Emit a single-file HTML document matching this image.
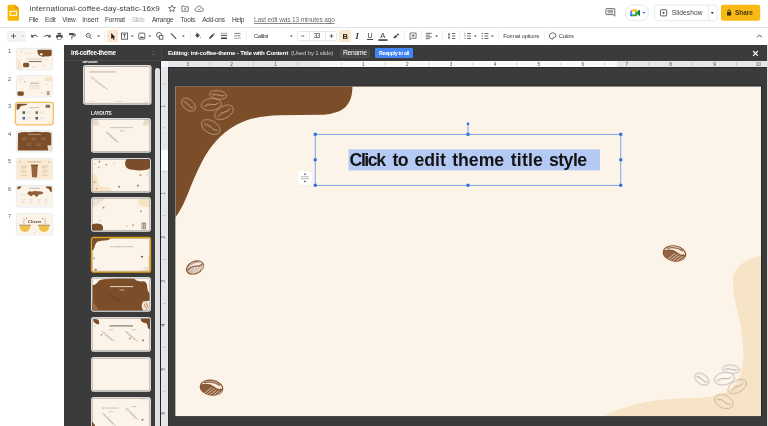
<!DOCTYPE html>
<html lang="en"><head><meta charset="utf-8"><title>international-coffee-day-static-16x9 - Google Slides</title>
<style>
html,body{margin:0;padding:0;}
body{width:768px;height:426px;overflow:hidden;background:#fff;position:relative;font-family:'Liberation Sans', sans-serif;}
.t{position:absolute;white-space:pre;line-height:1;font-family:'Liberation Sans', sans-serif;}
.a{position:absolute;}
svg{position:absolute;overflow:visible;}

.sep{position:absolute;top:31.3px;width:1px;height:9.6px;background:#eff0f2;}

</style></head><body>
<div id="app" style="position:absolute;left:0;top:0;width:768px;height:426px;overflow:hidden;will-change:transform">
<div class="a" id="header" style="left:0;top:0;width:768px;height:27px;background:#fff"></div>
<svg style="left:0;top:0" width="30" height="27" viewBox="0 0 30 27">
<path d="M9.1 4.8 H15.2 L19 8.6 V19.4 Q19 20.8 17.6 20.8 H9.1 Q7.6 20.8 7.6 19.4 V6.2 Q7.6 4.8 9.1 4.8 Z" fill="#f6b704"/>
<path d="M15.2 4.8 L19 8.6 H15.2 Z" fill="#e09a02"/>
<rect x="10.100" y="11.400" width="6.400" height="3.900" fill="none" stroke="#fff" stroke-width="1.050"/>
</svg>
<span class="t" style="left:29.60px;top:5px;font-size:8.1px;font-weight:400;color:#3a3a3a;letter-spacing:0.112px;">international-coffee-day-static-16x9</span>
<svg style="left:0;top:0" width="220" height="27" viewBox="0 0 220 27" fill="none" stroke="#555" stroke-width="0.75" stroke-linejoin="round">
<path d="M172 5.1 L173 7.4 L175.5 7.6 L173.6 9.2 L174.2 11.6 L172 10.3 L169.8 11.6 L170.4 9.2 L168.5 7.6 L171 7.4 Z"/>
<path d="M181.9 5.9 H184.2 L185 6.8 H188.3 V11.3 H181.9 Z"/>
<path d="M185.1 7.8 V10.2 M183.9 9 H186.3" stroke-width="0.6"/>
<path d="M196.5 11.3 Q194.9 11.2 194.9 9.7 Q195 8.3 196.5 8.2 Q197 6 199.2 6 Q201.2 6.1 201.7 8 Q203.5 8.2 203.5 9.7 Q203.4 11.2 201.9 11.3 Z"/>
<path d="M198 9 L199 10 L200.6 8.3" stroke-width="0.55"/>
</svg>
<span class="t" style="left:29.00px;top:17px;font-size:6.5px;font-weight:400;color:#3c3c3c;letter-spacing:-0.295px;">File</span>
<span class="t" style="left:45.10px;top:17px;font-size:6.5px;font-weight:400;color:#3c3c3c;letter-spacing:-0.168px;">Edit</span>
<span class="t" style="left:62.30px;top:17px;font-size:6.5px;font-weight:400;color:#3c3c3c;letter-spacing:-0.161px;">View</span>
<span class="t" style="left:82.30px;top:17px;font-size:6.5px;font-weight:400;color:#3c3c3c;letter-spacing:-0.013px;">Insert</span>
<span class="t" style="left:105.00px;top:17px;font-size:6.5px;font-weight:400;color:#3c3c3c;letter-spacing:-0.119px;">Format</span>
<span class="t" style="left:131.70px;top:17px;font-size:6.5px;font-weight:400;color:#b5b5b5;letter-spacing:-0.342px;">Slide</span>
<span class="t" style="left:152.00px;top:17px;font-size:6.5px;font-weight:400;color:#3c3c3c;letter-spacing:-0.271px;">Arrange</span>
<span class="t" style="left:180.50px;top:17px;font-size:6.5px;font-weight:400;color:#3c3c3c;letter-spacing:-0.097px;">Tools</span>
<span class="t" style="left:202.20px;top:17px;font-size:6.5px;font-weight:400;color:#3c3c3c;letter-spacing:-0.236px;">Add-ons</span>
<span class="t" style="left:232.00px;top:17px;font-size:6.5px;font-weight:400;color:#3c3c3c;letter-spacing:-0.325px;">Help</span>
<span class="t" style="left:254.10px;top:17px;font-size:6.5px;font-weight:400;color:#6a6a6a;letter-spacing:-0.130px;text-decoration:underline;text-decoration-thickness:0.5px;text-underline-offset:1px;text-decoration-color:#8a8a8a;">Last edit was 13 minutes ago</span>
<svg style="left:600px;top:0" width="168" height="27" viewBox="600 0 168 27">
<!-- comment icon -->
<path d="M606.3 8.6 H614.4 Q614.8 8.6 614.8 9 V16.2 L613 14.6 H606.3 Q605.9 14.6 605.9 14.2 V9 Q605.9 8.6 606.3 8.6 Z" fill="none" stroke="#5f6368" stroke-width="0.9"/>
<path d="M607.5 10.3 H613.2 M607.5 11.6 H613.2 M607.5 12.9 H613.2" stroke="#5f6368" stroke-width="0.7"/>
<!-- meet pill -->
<rect x="625.2" y="4.9" width="23.4" height="15.8" rx="7.9" fill="#fff" stroke="#dadce0" stroke-width="0.6"/>
<rect x="630.2" y="9.5" width="7" height="6.6" fill="#fff"/>
<path d="M630.2 11.4 L632.2 9.4 V11.4 Z" fill="#ea4335"/>
<path d="M632.2 9.4 H637.2 V11.4 H632.2 Z" fill="#fbbc04"/>
<path d="M630.2 11.4 H632.2 V14.2 H630.2 Z" fill="#4285f4"/>
<path d="M630.2 14.2 H632.2 V16.2 H630.7 Q630.2 16.2 630.2 15.7 Z" fill="#1a73e8"/>
<path d="M632.2 14.2 H635.2 V11.4 H637.2 V15.6 Q637.2 16.2 636.6 16.2 H632.2 Z" fill="#34a853"/>
<path d="M637.2 11.6 L639.6 9.7 Q640 9.5 640 10 V15.6 Q640 16.1 639.6 15.9 L637.2 14 Z" fill="#188038"/>
<path d="M642.4 12 H645.4 L643.9 13.7 Z" fill="#1a73e8"/>
<!-- slideshow button -->
<rect x="654.4" y="5.1" width="62.6" height="15.6" rx="2.2" fill="#fff" stroke="#dadce0" stroke-width="0.6"/>
<path d="M708.5 5.1 V20.7" stroke="#dadce0" stroke-width="0.6"/>
<rect x="660.5" y="9.7" width="6.2" height="6.2" rx="0.8" fill="none" stroke="#444" stroke-width="0.85"/>
<path d="M662.8 11.3 L665 12.8 L662.8 14.3 Z" fill="#444"/>
<path d="M710.6 12 H714 L712.3 14 Z" fill="#444"/>
<!-- share -->
<rect x="720.9" y="4.8" width="39.3" height="16" rx="2.2" fill="#f9b915"/>
<rect x="727" y="12" width="4.2" height="3.6" rx="0.5" fill="#3a2c05"/>
<path d="M727.9 12 V10.9 Q727.9 9.7 729.1 9.7 Q730.3 9.7 730.3 10.9 V12" fill="none" stroke="#3a2c05" stroke-width="0.75"/>
</svg>
<span class="t" style="left:671.80px;top:10px;font-size:6.6px;font-weight:400;color:#3c3c3c;letter-spacing:0.067px;">Slideshow</span>
<span class="t" style="left:735.10px;top:10px;font-size:6.5px;font-weight:700;color:#4a3907;letter-spacing:-0.070px;">Share</span>
<div class="a" style="left:0;top:27px;width:768px;height:0.6px;background:#e3e3e3"></div>
<div class="a" style="left:0;top:44.6px;width:768px;height:0.8px;background:#e6e6e6"></div>
<div class="a" style="left:7.3px;top:30.5px;width:18.7px;height:11px;background:#f1f3f4;border-radius:1.5px"></div>
<div class="a" style="left:107.100px;top:30.300px;width:11.300px;height:11.400px;background:#fce8cd;border-radius:1.2px"></div>
<div class="a" style="left:339.200px;top:30.300px;width:11.700px;height:11.400px;background:#fce8cd;border-radius:1.2px"></div>
<div class="a" style="left:297.3px;top:30.6px;width:39.3px;height:10.8px;border:1px solid #e6e8ea;border-radius:1.5px;box-sizing:border-box"></div>
<div class="a" style="left:308.6px;top:30.6px;width:1px;height:10.8px;background:#e6e8ea"></div>
<div class="a" style="left:325.4px;top:30.6px;width:1px;height:10.8px;background:#e6e8ea"></div>
<div class="sep" style="left:80px"></div>
<div class="sep" style="left:104px"></div>
<div class="sep" style="left:190px"></div>
<div class="sep" style="left:246px"></div>
<div class="sep" style="left:404px"></div>
<div class="sep" style="left:421px"></div>
<div class="sep" style="left:442px"></div>
<div class="sep" style="left:459px"></div>
<div class="sep" style="left:498px"></div>
<div class="sep" style="left:544px"></div>
<svg style="left:0;top:0" width="768" height="46" viewBox="0 0 768 46"><path d="M11.1 36 H15.9 M13.5 33.6 V38.4" stroke="#484848" stroke-width="0.85"/>
<path d="M21.80 35.40 H24.80 L23.30 37.10 Z" fill="#c4c4c4" stroke="none"/>
<path d="M32.2 36.3 Q34.8 33.7 37.6 36.6" fill="none" stroke="#484848" stroke-width="1"/><path d="M31.1 34.3 L31.3 37.6 L34.4 37.2 Z" fill="#484848"/>
<path d="M49.6 36.3 Q47 33.7 44.2 36.6" fill="none" stroke="#484848" stroke-width="1"/><path d="M50.7 34.3 L50.5 37.6 L47.4 37.2 Z" fill="#484848"/>
<rect x="57.6" y="32.9" width="3.6" height="1.6" fill="#484848"/><rect x="56.2" y="34.9" width="6.4" height="3.2" rx="0.6" fill="#484848"/><rect x="57.7" y="36.8" width="3.4" height="2.4" fill="#fff" stroke="#484848" stroke-width="0.5"/>
<rect x="69" y="33.1" width="5" height="2" fill="#484848"/><path d="M74 34.1 H75.2 V36 H71.9 V39.3" fill="none" stroke="#484848" stroke-width="0.85"/>
<circle cx="88.2" cy="35.4" r="2.1" fill="none" stroke="#484848" stroke-width="0.8"/><path d="M89.8 37 L91.6 38.9" stroke="#484848" stroke-width="0.9"/><path d="M87.2 35.4 H89.2" stroke="#484848" stroke-width="0.5"/>
<path d="M97.20 35.40 H100.20 L98.70 37.10 Z" fill="#484848" stroke="none"/>
<path d="M111.2 33 L111.2 39.1 L112.6 37.8 L113.6 39.9 L114.5 39.5 L113.5 37.5 L115.4 37.4 Z" fill="#1b1b1b"/>
<rect x="121.4" y="33" width="6.2" height="6.2" fill="none" stroke="#484848" stroke-width="0.8"/><path d="M122.9 34.6 H126.1 M124.5 34.6 V37.9" stroke="#484848" stroke-width="0.8"/>
<path d="M130.80 35.40 H133.80 L132.30 37.10 Z" fill="#484848" stroke="none"/>
<rect x="138.8" y="33.1" width="6" height="6" rx="0.5" fill="none" stroke="#484848" stroke-width="0.8"/><path d="M139.8 37.9 L141.2 36.2 L142.2 37.3 L143 36.6 L144 37.9 Z" fill="#484848"/>
<path d="M148.30 35.40 H151.30 L149.80 37.10 Z" fill="#484848" stroke="none"/>
<circle cx="159" cy="35" r="2.5" fill="none" stroke="#484848" stroke-width="0.8"/><rect x="159.3" y="35.6" width="3.6" height="3.6" fill="#fff" stroke="#484848" stroke-width="0.8"/>
<path d="M171 33.3 L176.2 38.8" stroke="#484848" stroke-width="1.1"/>
<path d="M181.80 35.40 H184.80 L183.30 37.10 Z" fill="#484848" stroke="none"/>
<path d="M195.2 35.4 L197.5 33.1 L199.8 35.4 L197.5 37.7 Z" fill="#484848"/><path d="M196.2 32.6 L197.8 34.2" stroke="#484848" stroke-width="0.6"/><path d="M200.2 36.6 Q201 37.8 200.2 38.3 Q199.4 37.8 200.2 36.6Z" fill="#484848"/>
<path d="M209 39 L209.3 37.3 L212.7 33.9 L214 35.2 L210.6 38.6 Z" fill="#484848"/><path d="M213.1 33.5 L213.8 32.9 L215 34.1 L214.4 34.8 Z" fill="#484848"/>
<path d="M221 33.3 H227" stroke="#484848" stroke-width="0.5"/><path d="M221 35.4 H227" stroke="#484848" stroke-width="1"/><path d="M221 38.2 H227" stroke="#484848" stroke-width="1.6"/>
<path d="M234.5 33.4 H240.5" stroke="#484848" stroke-width="0.7"/><path d="M234.5 35.8 H240.5" stroke="#484848" stroke-width="0.8" stroke-dasharray="2.4 0.8"/><path d="M234.5 38.2 H240.5" stroke="#484848" stroke-width="0.8" stroke-dasharray="1 0.7"/>
<path d="M289.80 35.40 H292.80 L291.30 37.10 Z" fill="#484848" stroke="none"/>
<path d="M301.3 36 H304.3" stroke="#484848" stroke-width="0.8"/><path d="M329.6 36 H333.4 M331.5 34.1 V37.9" stroke="#484848" stroke-width="0.8"/>
<rect x="378.400" y="39.400" width="9.200" height="1.300" fill="#111"/>
<g transform="translate(396.400 35.800) scale(0.96 0.84) translate(-397.100 -36.150)"><path d="M394 39.2 L394.3 37.6 L397 34.9 L398.4 36.3 L395.7 39 Z" fill="#484848"/><path d="M397.5 34.4 L398.4 33.5 Q398.8 33.1 399.3 33.6 L399.8 34.1 Q400.2 34.6 399.8 35 L398.9 35.9 Z" fill="#484848"/></g>
<path d="M410 33 H416.1 V38.2 H411.6 L410 39.7 Z" fill="none" stroke="#484848" stroke-width="0.75"/><path d="M411.7 35.6 H414.5 M413.1 34.2 V37" stroke="#484848" stroke-width="0.7"/>
<path d="M425.8 33.3 H431.8 M425.8 35.1 H429.8 M425.8 36.9 H431.8 M425.8 38.7 H429.8" stroke="#484848" stroke-width="0.8"/>
<path d="M435.00 35.40 H438.00 L436.50 37.10 Z" fill="#484848" stroke="none"/>
<path d="M452 33.5 H455.3 M452 36 H455.3 M452 38.5 H455.3" stroke="#484848" stroke-width="0.8"/><path d="M449 33.8 V38.2" stroke="#484848" stroke-width="0.8"/><path d="M447.7 34.6 L449 33 L450.3 34.6 Z M447.7 37.4 L449 39 L450.3 37.4 Z" fill="#484848"/>
<path d="M467 33.5 H471 M467 36 H471 M467 38.5 H471" stroke="#484848" stroke-width="0.8"/><path d="M464.7 32.8 V34.3 M464.3 35.5 H465.3 V36.5 M464.3 38 H465.3 V39" stroke="#484848" stroke-width="0.5" fill="none"/>
<path d="M473.80 35.40 H476.80 L475.30 37.10 Z" fill="#484848" stroke="none"/>
<path d="M484.4 33.5 H488.4 M484.4 36 H488.4 M484.4 38.5 H488.4" stroke="#484848" stroke-width="0.8"/><rect x="481.6" y="33" width="1.1" height="1.1" fill="#484848"/><rect x="481.6" y="35.5" width="1.1" height="1.1" fill="#484848"/><rect x="481.6" y="38" width="1.1" height="1.1" fill="#484848"/>
<path d="M490.80 35.40 H493.80 L492.30 37.10 Z" fill="#484848" stroke="none"/>
<path d="M552.6 32.8 Q555.9 32.9 555.9 35.8 Q555.8 37.4 554.3 37.4 H553.6 Q552.9 37.5 553.2 38.3 Q553.4 39.2 552.5 39.2 Q549.4 39 549.4 36 Q549.5 32.9 552.6 32.8 Z" fill="none" stroke="#484848" stroke-width="0.8"/>
<path d="M757.2 37.300 L759.5 34.900 L761.8 37.300" fill="none" stroke="#4a4a4a" stroke-width="1"/></svg>
<span class="t" style="left:253.90px;top:33px;font-size:6.1px;font-weight:400;color:#3c3c3c;letter-spacing:-0.464px;">Calibri</span>
<span class="t" style="left:313.70px;top:33px;font-size:6.3px;font-weight:400;color:#333;letter-spacing:-0.316px;">33</span>
<span class="t" style="left:342.60px;top:33px;font-size:7.6px;font-weight:700;color:#222;">B</span>
<span class="t" style="left:355.60px;top:33px;font-size:8.4px;font-weight:400;color:#333;font-style:italic;font-family:'Liberation Serif',serif;font-weight:700;">I</span>
<span class="t" style="left:367.40px;top:32px;font-size:7.2px;font-weight:400;color:#333;">U</span>
<div class="a" style="left:367.1px;top:39.4px;width:5.6px;height:0.6px;background:#444"></div>
<span class="t" style="left:380.30px;top:32px;font-size:7.6px;font-weight:400;color:#333;">A</span>
<span class="t" style="left:503.20px;top:34px;font-size:5.8px;font-weight:400;color:#3c3c3c;letter-spacing:-0.213px;">Format options</span>
<span class="t" style="left:558.80px;top:34px;font-size:5.8px;font-weight:400;color:#3c3c3c;letter-spacing:-0.353px;">Colors</span>
<div class="a" style="left:0;top:45.4px;width:64.2px;height:381px;background:#fff"></div>
<span class="t" style="left:8.00px;top:49px;font-size:5.6px;font-weight:400;color:#5a5a5a;">1</span>
<svg style="left:16.0px;top:47.6px" width="37.0" height="22.4" viewBox="0 0 37 22" preserveAspectRatio="none"><rect x="0.4" y="0.4" width="36.2" height="21.2" rx="2.2" fill="#fdfbf8"/><rect x="1.3" y="1.3" width="34.4" height="19.4" rx="1.2" fill="#fcf4e9"/><g><path d="M21.5 1.8 Q21 5.600 23.500 7.600 Q26.500 9 30 8.200 Q33 8.500 35.600 7.400 V1.800 Z" fill="#7c4d29"/><ellipse cx="25.3" cy="6.200" rx="1.500" ry="1.100" fill="#fff"/><path d="M1.3 10.500 Q4 11 4.600 15 Q5.500 19.500 9 20.700 H1.300 Z" fill="#f7e3c6"/><rect x="7" y="14.400" width="6.200" height="4.400" rx="1.600" fill="#80512d"/><path d="M12.500 13.300 H25.500" stroke="#5d5048" stroke-width="0.8"/><path d="M10 10.900 H27" stroke="#c2ae9b" stroke-width="0.6" stroke-dasharray="1.500 0.500"/><circle cx="5.700" cy="3.500" r="0.600" fill="#d2c1b0"/><circle cx="10" cy="5.300" r="0.700" fill="#d2c1b0"/><circle cx="14.800" cy="4.200" r="0.500" fill="#dccdbd"/><circle cx="30" cy="11" r="0.500" fill="#c2ae9b"/><circle cx="28.500" cy="17.500" r="0.600" fill="#d3b68f"/><circle cx="17.500" cy="18.600" r="0.600" fill="#d3b68f"/></g><rect x="0.4" y="0.4" width="36.2" height="21.2" rx="2.2" fill="none" stroke="#e3e6e9" stroke-width="0.8"/></svg>
<span class="t" style="left:8.00px;top:77px;font-size:5.6px;font-weight:400;color:#5a5a5a;">2</span>
<svg style="left:16.0px;top:75.3px" width="37.0" height="22.4" viewBox="0 0 37 22" preserveAspectRatio="none"><rect x="0.4" y="0.4" width="36.2" height="21.2" rx="2.2" fill="#fdfbf8"/><rect x="1.3" y="1.3" width="34.4" height="19.4" rx="1.2" fill="#fcf4e9"/><g><path d="M28.500 3 Q30 1.300 35.700 1.500 V5.500 Q32 6.800 29.500 5.800 Q28 4.800 28.500 3 Z" fill="#f7e3c6"/><rect x="1.500" y="16.300" width="6.200" height="4" rx="0.800" fill="#7a4a28"/><path d="M14 8 H23.200" stroke="#a08c78" stroke-width="0.7"/><path d="M13 10.200 H24 M13 11.700 H24 M14 13.200 H23" stroke="#ded3c7" stroke-width="0.6"/><path d="M2.500 3 H8 M2.500 4.500 H7 M2.500 6 H6" stroke="#e6dccf" stroke-width="0.5"/><rect x="30.800" y="15.800" width="2.800" height="4" fill="#b79c83"/><circle cx="8.500" cy="6.500" r="0.600" fill="#a59686"/><circle cx="30.500" cy="9.300" r="0.500" fill="#c8bcae"/><circle cx="25.500" cy="17.500" r="0.500" fill="#c9b49c"/></g><rect x="0.4" y="0.4" width="36.2" height="21.2" rx="2.2" fill="none" stroke="#e3e6e9" stroke-width="0.8"/></svg>
<span class="t" style="left:8.00px;top:104px;font-size:5.6px;font-weight:400;color:#5a5a5a;">3</span>
<svg style="left:15.3px;top:102.2px" width="38.7" height="23.3" viewBox="0 0 37 22" preserveAspectRatio="none"><rect x="0.4" y="0.4" width="36.2" height="21.2" rx="2.2" fill="#fdfbf8"/><rect x="1.3" y="1.3" width="34.4" height="19.4" rx="1.2" fill="#fcf4e9"/><g><path d="M1.600 1.700 H11.800 Q11.500 3.200 8 3.300 Q4.500 3.500 4 6.700 L1.600 7.500 Z" fill="#7c4d29"/><path d="M29.300 2.600 H33.600 V5.400 H29.300 Z" fill="#8a6a4e"/><path d="M13.100 5.300 H23.200" stroke="#b7a999" stroke-width="0.6"/><rect x="7.200" y="8.800" width="2.400" height="2.400" fill="#4d5a70"/><rect x="19.600" y="8.800" width="2.400" height="2.400" fill="#7a6654"/><rect x="7.200" y="14.100" width="2.400" height="2.400" fill="#3f6cab"/><rect x="19.600" y="14.100" width="2.400" height="2.400" fill="#4d5a70"/><path d="M11 9.300 H15.500 M11 10.700 H15.500 M23.500 9.300 H28 M23.500 10.700 H28 M11 14.600 H15.500 M11 16 H15.500 M23.500 14.600 H28 M23.500 16 H28" stroke="#e0d6cb" stroke-width="0.5"/><path d="M30 20.700 Q34 19.500 35.700 14.500 V20.700 Z" fill="#fbecd6"/></g><rect x="0.4" y="0.4" width="36.2" height="21.2" rx="2.2" fill="none" stroke="#f4bf63" stroke-width="1.3"/></svg>
<span class="t" style="left:8.00px;top:132px;font-size:5.6px;font-weight:400;color:#5a5a5a;">4</span>
<svg style="left:16.0px;top:130.2px" width="37.0" height="22.4" viewBox="0 0 37 22" preserveAspectRatio="none"><rect x="0.4" y="0.4" width="36.2" height="21.2" rx="2.2" fill="#fdfbf8"/><rect x="1.3" y="1.3" width="34.4" height="19.4" rx="1.2" fill="#fcf4e9"/><g><path d="M2 3.300 Q6 1.500 12 2.200 Q20 1.400 27 2.200 Q33 1.600 35.300 3.200 V20.200 H1.800 Z" fill="#7c4d29"/><path d="M12 4.300 H25" stroke="#d9c3ab" stroke-width="0.6"/><path d="M6 8 H11 M15.500 8 H20.500 M25 8 H30 M6 9.500 H10 M15.500 9.500 H19.500 M25 9.500 H29 M10.500 13.600 H15.500 M20.500 13.600 H25.500 M10.500 15.100 H14.500 M20.500 15.100 H24.500" stroke="#a88361" stroke-width="0.6"/><path d="M31.500 15 H35.700 V20.700 H32.500 Q31.500 18 31.500 15 Z" fill="#f1e1cd"/></g><rect x="0.4" y="0.4" width="36.2" height="21.2" rx="2.2" fill="none" stroke="#e3e6e9" stroke-width="0.8"/></svg>
<span class="t" style="left:8.00px;top:159px;font-size:5.6px;font-weight:400;color:#5a5a5a;">5</span>
<svg style="left:16.0px;top:157.7px" width="37.0" height="22.4" viewBox="0 0 37 22" preserveAspectRatio="none"><rect x="0.4" y="0.4" width="36.2" height="21.2" rx="2.2" fill="#fdfbf8"/><rect x="1.3" y="1.3" width="34.4" height="19.4" rx="1.2" fill="#fcf4e9"/><g><rect x="1.300" y="1.300" width="34.400" height="19.400" fill="#fbead1"/><path d="M15.300 7.700 H21.700 L21 18.800 H16 Z" fill="#94643e"/><path d="M15 6.500 H22 V7.900 H15 Z" fill="#7c4f2c"/><path d="M12 3.800 H25" stroke="#a98b6c" stroke-width="0.6"/><path d="M5 8 H11 M5 9.600 H10 M5 12.500 H11 M5 14.100 H10 M5 17 H11 M26 8 H32 M26 9.600 H31 M26 12.500 H32 M26 14.100 H31 M26 17 H32" stroke="#d2b795" stroke-width="0.6"/><circle cx="4" cy="3.800" r="0.900" fill="#dcc3a0"/><circle cx="33" cy="3.800" r="0.900" fill="#dcc3a0"/></g><rect x="0.4" y="0.4" width="36.2" height="21.2" rx="2.2" fill="none" stroke="#e3e6e9" stroke-width="0.8"/></svg>
<span class="t" style="left:8.00px;top:187px;font-size:5.6px;font-weight:400;color:#5a5a5a;">6</span>
<svg style="left:16.0px;top:185.3px" width="37.0" height="22.4" viewBox="0 0 37 22" preserveAspectRatio="none"><rect x="0.4" y="0.4" width="36.2" height="21.2" rx="2.2" fill="#fdfbf8"/><rect x="1.3" y="1.3" width="34.4" height="19.4" rx="1.2" fill="#fcf4e9"/><g><path d="M1.500 1.500 H5.500 Q5.300 3 3.800 3.400 Q2.200 3.800 1.500 5 Z" fill="#7c4d29"/><path d="M30 1.500 H35.700 V7 Q33.800 7 33.400 4.600 Q32.600 3 30 3 Z" fill="#7c4d29"/><path d="M13 3.200 H24" stroke="#a59686" stroke-width="0.6"/><path d="M11.500 7.500 Q13.500 5.400 16 6.600 Q18 5.400 21.500 6.200 Q26 5.600 27.500 7.600 Q26 10 23 9.200 Q22 12.600 19.500 11 Q18.500 9 16.500 9.800 Q15.500 12 13.500 10 Q11.500 9.500 11.500 7.500 Z" fill="#90603a"/><path d="M3 9.700 H12" stroke="#d9cdbf" stroke-width="0.4"/><path d="M5 14.300 H10 M13 14.300 H17 M21 14.300 H25 M28.500 14.300 H32 M5 15.900 H9 M13 15.900 H17 M21 15.900 H25 M28.500 15.900 H32 M5 17.500 H9 M13 17.500 H16 M21 17.500 H24 M28.500 17.500 H31" stroke="#dcd1c5" stroke-width="0.5"/></g><rect x="0.4" y="0.4" width="36.2" height="21.2" rx="2.2" fill="none" stroke="#e3e6e9" stroke-width="0.8"/></svg>
<span class="t" style="left:8.00px;top:214px;font-size:5.6px;font-weight:400;color:#5a5a5a;">7</span>
<svg style="left:16.0px;top:212.7px" width="37.0" height="22.4" viewBox="0 0 37 22" preserveAspectRatio="none"><rect x="0.4" y="0.4" width="36.2" height="21.2" rx="2.2" fill="#fdfbf8"/><rect x="1.3" y="1.3" width="34.4" height="19.4" rx="1.2" fill="#fcf4e9"/><g><text x="18.700" y="9.800" text-anchor="middle" font-family="Liberation Serif, serif" font-style="italic" font-weight="700" font-size="4.600" fill="#5f4028">Cheers</text><path d="M3.600 12.300 H14.400 Q14.200 18.400 9 18.600 Q3.800 18.400 3.600 12.300 Z" fill="#f0c04a"/><path d="M22.600 12.300 H33.400 Q33.200 18.400 28 18.600 Q22.800 18.400 22.600 12.300 Z" fill="#f0c04a"/><path d="M3 12 H15 M22 12 H34" stroke="#94643e" stroke-width="0.700"/><path d="M7.500 5 Q9 6.300 7.800 8 Q7 9.500 8.500 10.800" stroke="#a8937e" stroke-width="0.600" fill="none"/><path d="M29.500 5 Q28 6.300 29.200 8 Q30 9.500 28.500 10.800" stroke="#a8937e" stroke-width="0.600" fill="none"/><circle cx="10.500" cy="5" r="0.600" fill="#94643e"/><circle cx="26.500" cy="5.400" r="0.600" fill="#94643e"/><circle cx="18.500" cy="19" r="0.400" fill="#94643e"/></g><rect x="0.4" y="0.4" width="36.2" height="21.2" rx="2.2" fill="none" stroke="#e3e6e9" stroke-width="0.8"/></svg>
<div class="a" style="left:64.2px;top:45.4px;width:703.8px;height:381px;background:#3b3b3b"></div>
<div class="a" style="left:766.9px;top:45.4px;width:1.1px;height:381px;background:#dcdcdc"></div>
<span class="t" style="left:70.90px;top:50px;font-size:6.3px;font-weight:700;color:#fff;letter-spacing:-0.259px;">int-coffee-theme</span>
<svg style="left:150px;top:48px" width="8" height="10" viewBox="150 48 8 10"><path d="M152.3 52 L153.4 50.6 L154.5 52 Z M152.3 54 L153.4 55.4 L154.5 54 Z" fill="#6a6a6a"/></svg>
<div class="a" style="left:64.2px;top:60.2px;width:97px;height:0.5px;background:#4b4b4b"></div>
<div class="a" style="left:159.800px;top:60.600px;width:1.400px;height:366px;background:#222"></div>
<div class="a" style="left:161px;top:45.4px;width:1px;height:15px;background:#474747"></div>
<div class="a" style="left:155px;top:68.300px;width:4.700px;height:360px;background:#e0e0e0;border-radius:2.3px"></div>
<div class="a" style="left:82px;top:60.7px;width:30px;height:3px;overflow:hidden"><span class="t" style="left:0.60px;top:-1px;font-size:4.6px;font-weight:700;color:#ededed;letter-spacing:-0.841px;">MASTER</span></div>
<span class="t" style="left:91.00px;top:112px;font-size:4.7px;font-weight:700;color:#f2f2f2;letter-spacing:-0.211px;">LAYOUTS</span>
<svg style="left:82.5px;top:64.7px" width="68.6" height="39.9" viewBox="0 0 60 34" preserveAspectRatio="none"><rect x="0.5" y="0.5" width="59" height="33" rx="1.8" fill="#fcf4e9"/><path d="M5.8 5.9 H28.700" stroke="#a59b91" stroke-width="0.65"/><path d="M6.4 10 L10 11.600 M8 11.400 L13 14 M10.500 13.400 L16 16.400 M13 15.600 L19 18.600 M16 17.800 L21.700 20.600" stroke="#c9c0b6" stroke-width="0.7"/><path d="M5.700 31.200 H11 M28 31.200 H34 M54 31.200 H56" stroke="#ddd3c8" stroke-width="0.6"/><rect x="1.25" y="1.25" width="57.5" height="31.5" rx="1.3" fill="none" stroke="#4a4a4a" stroke-width="0.5" opacity="0.75"/><rect x="0.5" y="0.5" width="59" height="33" rx="1.8" fill="none" stroke="#e2e2e2" stroke-width="0.9"/></svg>
<svg style="left:91.2px;top:118.0px" width="60.0" height="34.8" viewBox="0 0 60 34" preserveAspectRatio="none"><rect x="0.5" y="0.5" width="59" height="33" rx="1.8" fill="#fcf4e9"/><path d="M1 1 L6 1 Q8 4 8.5 8 Q5 6.500 3 8 Q1.5 5 1 1 Z" fill="#eadccb"/><path d="M59 1 L54 1 Q52 4 51.500 8 Q55 6.5 57 8 Q58.5 5 59 1 Z" fill="#eadccb"/><path d="M19.5 9.4 H42" stroke="#aaa096" stroke-width="0.7" stroke-dasharray="2.6 0.5 1.2 0.5 2 0.5 3 0.5"/><path d="M29 12.6 H33.5" stroke="#b5aaa0" stroke-width="0.7"/><path d="M15 14 L18.5 15.400 M16.500 15.600 L21 17.5 M18.500 17.500 L23.500 19.800 M20.500 19.4 L26 22 M23 21.4 L28 24" stroke="#bdb2a7" stroke-width="0.8"/><rect x="1.25" y="1.25" width="57.5" height="31.5" rx="1.3" fill="none" stroke="#4a4a4a" stroke-width="0.5" opacity="0.75"/><rect x="0.5" y="0.5" width="59" height="33" rx="1.8" fill="none" stroke="#e2e2e2" stroke-width="0.9"/></svg>
<svg style="left:91.2px;top:157.8px" width="60.0" height="34.8" viewBox="0 0 60 34" preserveAspectRatio="none"><rect x="0.5" y="0.5" width="59" height="33" rx="1.8" fill="#fcf4e9"/><path d="M34 1 H59 V9 Q58 11.5 54 11.800 Q48 12.8 42 11.600 Q36 11.4 34.5 7.500 Q33.2 3.5 36 1 Z" fill="#7c4d29"/><path d="M1 15 Q5.500 15.4 6.500 20 Q6.600 26 11 28.400 Q17 27.600 20.500 30.200 L21 33 H1 Z" fill="#f7e3c6"/><circle cx="8.5" cy="3.5" r="1" fill="#b08e6e"/><circle cx="3.6" cy="5.4" r="0.6" fill="#b9a38f"/><circle cx="15.3" cy="6.400" r="0.9" fill="#a9876a"/><circle cx="7.7" cy="9" r="0.7" fill="#b08e6e"/><circle cx="23.500" cy="5" r="0.7" fill="#c8b39f"/><circle cx="49.5" cy="16.5" r="0.9" fill="#a9876a"/><circle cx="47" cy="27" r="1" fill="#a9876a"/><circle cx="28" cy="28" r="1" fill="#a9876a"/><circle cx="3.5" cy="23.500" r="0.9" fill="#c09c6e"/><circle cx="5.5" cy="30" r="0.8" fill="#c09c6e"/><path d="M56.5 14 Q55 16.5 57.5 18.5" stroke="#ddd2c6" stroke-width="0.7" fill="none"/><rect x="1.25" y="1.25" width="57.5" height="31.5" rx="1.3" fill="none" stroke="#4a4a4a" stroke-width="0.5" opacity="0.75"/><rect x="0.5" y="0.5" width="59" height="33" rx="1.8" fill="none" stroke="#e2e2e2" stroke-width="0.9"/></svg>
<svg style="left:91.2px;top:197.4px" width="60.0" height="34.8" viewBox="0 0 60 34" preserveAspectRatio="none"><rect x="0.5" y="0.5" width="59" height="33" rx="1.8" fill="#fcf4e9"/><path d="M1 1 H14 Q11 4 8 6.500 Q5 9.500 2.500 10 L1 10.500 Z" fill="#ede3d6"/><path d="M47 3 Q50 0.600 59 1.400 V9 Q55 10.5 51 9.400 Q46.5 8.4 47 3 Z" fill="#f7e3c6"/><path d="M1 26.800 Q5 25.400 9.500 26.400 Q12.6 28 12 31.4 Q11 33 9 33 H1 Z" fill="#7c4d29"/><circle cx="12.5" cy="10.200" r="1" fill="#b89a7c"/><circle cx="50" cy="14" r="0.9" fill="#a9876a"/><circle cx="9" cy="23.200" r="0.7" fill="#c8b39f"/><circle cx="42" cy="27.6" r="0.9" fill="#b89a7c"/><circle cx="36" cy="28.6" r="0.7" fill="#c8b39f"/><rect x="50.5" y="25" width="4.6" height="6.500" fill="#a58a70"/><path d="M51.6 26 V31 M53.800 26 V31" stroke="#f1e6d8" stroke-width="0.7"/><rect x="1.25" y="1.25" width="57.5" height="31.5" rx="1.3" fill="none" stroke="#4a4a4a" stroke-width="0.5" opacity="0.75"/><rect x="0.5" y="0.5" width="59" height="33" rx="1.8" fill="none" stroke="#e2e2e2" stroke-width="0.9"/></svg>
<svg style="left:91.2px;top:237.1px" width="60.0" height="35.6" viewBox="0 0 60 34" preserveAspectRatio="none"><rect x="0.5" y="0.5" width="59" height="33" rx="1.8" fill="#fcf4e9"/><path d="M1 1 H19.200 Q19 2.900 16.500 3.100 Q9.500 3.200 6.200 4.600 Q3.900 6.500 3.400 10 Q2.900 12.200 1 13 Z" fill="#7c4d29"/><path d="M59 18 Q56.5 19 57 23 Q58 28.500 55.500 30.500 Q52 31.800 46 33 H59 Z" fill="#f7e3c6"/><path d="M19 9.3 H42" stroke="#aaa096" stroke-width="0.7" stroke-dasharray="2.6 0.5 1.2 0.5 2 0.5 3 0.5"/><ellipse cx="3.2" cy="20.300" rx="1" ry="0.7" fill="#b08e6e"/><ellipse cx="51" cy="18.700" rx="1.2" ry="0.8" fill="#8a5a36"/><ellipse cx="4.7" cy="31.200" rx="1.2" ry="0.8" fill="#9c6f4a"/><path d="M53 29 L57 29.500 M54 31 L57 30.500" stroke="#d9cbbb" stroke-width="0.6"/><rect x="1.25" y="1.25" width="57.5" height="31.5" rx="1.3" fill="none" stroke="#4a4a4a" stroke-width="0.5" opacity="0.75"/><rect x="0.5" y="0.5" width="59" height="33" rx="1.8" fill="none" stroke="#e3a21a" stroke-width="1.3"/></svg>
<svg style="left:91.2px;top:277.3px" width="60.0" height="34.8" viewBox="0 0 60 34" preserveAspectRatio="none"><rect x="0.5" y="0.5" width="59" height="33" rx="1.8" fill="#fcf4e9"/><rect x="1" y="1" width="58" height="32" fill="#fcf4e9"/><path d="M1.500 8 Q5.500 7.500 8 3.400 Q12 1.800 20 1.600 Q30 1.200 43 1.700 Q46 4.800 52 4.200 Q55.500 4.500 56 8 Q56 13 58.500 16.500 V23 Q54 23.500 51 26 Q50 30 52.500 33 H1.500 Z" fill="#7c4d29"/><path d="M19 9.400 H42" stroke="#f1e2d0" stroke-width="0.9"/><path d="M28.500 12.700 H33.500" stroke="#e5cfb6" stroke-width="0.7"/><path d="M16 16 L30 24.500" stroke="#744524" stroke-width="1.6"/><path d="M52 24 L58 23.5 V33 H53 Q50.5 28.500 52 24 Z" fill="#f3e4d0"/><path d="M53 26 L56 32 M55 25 L57.500 30" stroke="#9c6f4a" stroke-width="0.7"/><path d="M1 24 Q5 26.500 7.500 33 H1 Z" fill="#9a6c46"/><rect x="1.25" y="1.25" width="57.5" height="31.5" rx="1.3" fill="none" stroke="#4a4a4a" stroke-width="0.5" opacity="0.75"/><rect x="0.5" y="0.5" width="59" height="33" rx="1.8" fill="none" stroke="#e2e2e2" stroke-width="0.9"/></svg>
<svg style="left:91.2px;top:316.9px" width="60.0" height="34.8" viewBox="0 0 60 34" preserveAspectRatio="none"><rect x="0.5" y="0.5" width="59" height="33" rx="1.8" fill="#fcf4e9"/><path d="M2 2.200 Q5 1.600 7.500 3 Q8.700 5 8 7 Q5.500 7.500 4.500 6 Q2.400 5.500 2 2.2 Z" fill="#7c4d29"/><path d="M49.5 1.400 H59 V12 Q56.4 11.500 56.5 8 Q56 5.600 53 5.600 Q50 5 49.500 1.400 Z" fill="#7c4d29"/><path d="M18.500 8.700 H42" stroke="#6f645a" stroke-width="1"/><path d="M18 12.500 H22.500 M41 12.5 H45.500" stroke="#c4b9ad" stroke-width="0.7"/><path d="M10.500 14 L14 15.500 M12 15.6 L17 18 M14 17.400 L19 20 M16 19.200 L21.500 22 M19 21.300 L23.500 23.500" stroke="#c4b9ad" stroke-width="0.8"/><path d="M34 14 L37.500 15.5 M35.500 15.600 L40.500 18 M37.500 17.4 L42.500 20 M39.500 19.200 L45 22 M42.500 21.3 L47 23.500" stroke="#c4b9ad" stroke-width="0.8"/><circle cx="10.500" cy="17.300" r="0.7" fill="#9c6f4a"/><circle cx="39" cy="21" r="0.8" fill="#9c6f4a"/><circle cx="52" cy="22.8" r="0.9" fill="#8a5a36"/><circle cx="4" cy="8.800" r="0.6" fill="#b9a38f"/><rect x="1.25" y="1.25" width="57.5" height="31.5" rx="1.3" fill="none" stroke="#4a4a4a" stroke-width="0.5" opacity="0.75"/><rect x="0.5" y="0.5" width="59" height="33" rx="1.8" fill="none" stroke="#e2e2e2" stroke-width="0.9"/></svg>
<svg style="left:91.2px;top:356.6px" width="60.0" height="34.8" viewBox="0 0 60 34" preserveAspectRatio="none"><rect x="0.5" y="0.5" width="59" height="33" rx="1.8" fill="#fcf4e9"/><rect x="1.25" y="1.25" width="57.5" height="31.5" rx="1.3" fill="none" stroke="#4a4a4a" stroke-width="0.5" opacity="0.75"/><rect x="0.5" y="0.5" width="59" height="33" rx="1.8" fill="none" stroke="#e2e2e2" stroke-width="0.9"/></svg>
<svg style="left:91.2px;top:397.4px" width="60.0" height="34.8" viewBox="0 0 60 34" preserveAspectRatio="none"><rect x="0.5" y="0.5" width="59" height="33" rx="1.8" fill="#fcf4e9"/><path d="M10.500 10.800 H27.500" stroke="#aaa096" stroke-width="0.7" stroke-dasharray="2.6 0.5 1.2 0.5 2 0.5 3 0.5"/><path d="M40.500 9.400 H45.500" stroke="#b5aaa0" stroke-width="0.7"/><path d="M17.500 14.300 H22.500" stroke="#c4b9ad" stroke-width="0.6"/><path d="M11 16 L15 18 M12.500 17.800 L18 20.800 M15 20 L20.500 23.200 M17 22.300 L22.500 25.600 M19.500 24.800 L24.500 27.800" stroke="#c4b9ad" stroke-width="0.8"/><path d="M34 10.500 L38 12.500 M35.500 12.300 L41 15.300 M38 14.500 L43.500 17.700 M40 16.800 L45.500 20.100 M42.500 19.300 L47.500 22.300" stroke="#c4b9ad" stroke-width="0.8"/><path d="M48 1.500 Q52 3 54.500 2.500 Q56.500 6 58 9.500" stroke="#e7dbcd" stroke-width="0.6" fill="none"/><ellipse cx="51.5" cy="22.300" rx="1.2" ry="0.8" fill="#9c6f4a"/><path d="M1 24 Q4 26.500 5 31 L5.500 33 H1 Z" fill="#7c4d29"/><rect x="1.25" y="1.25" width="57.5" height="31.5" rx="1.3" fill="none" stroke="#4a4a4a" stroke-width="0.5" opacity="0.75"/><rect x="0.5" y="0.5" width="59" height="33" rx="1.8" fill="none" stroke="#e2e2e2" stroke-width="0.9"/></svg>
<span class="t" style="left:167.90px;top:50px;font-size:6.2px;font-weight:700;color:#fff;letter-spacing:-0.219px;">Editing: int-coffee-theme - Title with Content</span>
<span class="t" style="left:291.00px;top:50px;font-size:6.1px;font-weight:400;color:#c9c9c9;letter-spacing:-0.208px;">(Used by 1 slide)</span>
<div class="a" style="left:340.2px;top:48.8px;width:29.6px;height:8.8px;background:#464646;border:0.5px solid #4d4d4d;box-sizing:border-box;border-radius:1px"></div>
<span class="t" style="left:343.00px;top:50px;font-size:6.7px;font-weight:400;color:#fff;letter-spacing:-0.256px;">Rename</span>
<div class="a" style="left:375.2px;top:48.2px;width:37.8px;height:9.6px;background:#4285f4;border-radius:1px"></div>
<span class="t" style="left:379.00px;top:51px;font-size:5.3px;font-weight:700;color:#fff;letter-spacing:-0.319px;">Reapply to all</span>
<svg style="left:750px;top:48px" width="12" height="12" viewBox="750 48 12 12"><path d="M753.1 51 L757.9 55.8 M757.9 51 L753.1 55.8" stroke="#fff" stroke-width="1.15"/></svg>
<div class="a" style="left:161.2px;top:60.8px;width:605.7px;height:6.2px;background:#e5e7ea"></div>
<div class="a" style="left:319.6px;top:60.8px;width:297.4px;height:6.2px;background:#fbfbfb"></div>
<div class="a" style="left:161.2px;top:67px;width:6.8px;height:360px;background:#e5e7ea"></div>
<div class="a" style="left:161.2px;top:149.6px;width:6.8px;height:20.9px;background:#fbfbfb"></div>
<div class="a" style="left:161.2px;top:60.8px;width:6.8px;height:6.2px;background:#f4f5f6"></div>
<div class="a" style="left:168px;top:67px;width:0.7px;height:360px;background:#2a2a2a"></div>
<div class="a" style="left:168px;top:67px;width:599px;height:0.7px;background:#2a2a2a"></div>
<svg style="left:0;top:0" width="768" height="426" viewBox="0 0 768 426"><circle cx="171.24" cy="64" r="0.28" fill="#a8a8a8"/><circle cx="176.72" cy="64" r="0.28" fill="#a8a8a8"/><circle cx="182.21" cy="64" r="0.28" fill="#a8a8a8"/><circle cx="193.19" cy="64" r="0.28" fill="#a8a8a8"/><circle cx="198.67" cy="64" r="0.28" fill="#a8a8a8"/><circle cx="204.16" cy="64" r="0.28" fill="#a8a8a8"/><path d="M209.65 62.7 V65.300" stroke="#9a9a9a" stroke-width="0.5"/><circle cx="215.14" cy="64" r="0.28" fill="#a8a8a8"/><circle cx="220.62" cy="64" r="0.28" fill="#a8a8a8"/><circle cx="226.11" cy="64" r="0.28" fill="#a8a8a8"/><circle cx="237.09" cy="64" r="0.28" fill="#a8a8a8"/><circle cx="242.57" cy="64" r="0.28" fill="#a8a8a8"/><circle cx="248.06" cy="64" r="0.28" fill="#a8a8a8"/><path d="M253.55 62.7 V65.300" stroke="#9a9a9a" stroke-width="0.5"/><circle cx="259.04" cy="64" r="0.28" fill="#a8a8a8"/><circle cx="264.52" cy="64" r="0.28" fill="#a8a8a8"/><circle cx="270.01" cy="64" r="0.28" fill="#a8a8a8"/><circle cx="280.99" cy="64" r="0.28" fill="#a8a8a8"/><circle cx="286.47" cy="64" r="0.28" fill="#a8a8a8"/><circle cx="291.96" cy="64" r="0.28" fill="#a8a8a8"/><path d="M297.45 62.7 V65.300" stroke="#9a9a9a" stroke-width="0.5"/><circle cx="302.94" cy="64" r="0.28" fill="#a8a8a8"/><circle cx="308.42" cy="64" r="0.28" fill="#a8a8a8"/><circle cx="313.91" cy="64" r="0.28" fill="#a8a8a8"/><circle cx="324.89" cy="64" r="0.28" fill="#a8a8a8"/><circle cx="330.38" cy="64" r="0.28" fill="#a8a8a8"/><circle cx="335.86" cy="64" r="0.28" fill="#a8a8a8"/><path d="M341.35 62.7 V65.300" stroke="#9a9a9a" stroke-width="0.5"/><circle cx="346.84" cy="64" r="0.28" fill="#a8a8a8"/><circle cx="352.32" cy="64" r="0.28" fill="#a8a8a8"/><circle cx="357.81" cy="64" r="0.28" fill="#a8a8a8"/><circle cx="368.79" cy="64" r="0.28" fill="#a8a8a8"/><circle cx="374.27" cy="64" r="0.28" fill="#a8a8a8"/><circle cx="379.76" cy="64" r="0.28" fill="#a8a8a8"/><path d="M385.25 62.7 V65.300" stroke="#9a9a9a" stroke-width="0.5"/><circle cx="390.74" cy="64" r="0.28" fill="#a8a8a8"/><circle cx="396.22" cy="64" r="0.28" fill="#a8a8a8"/><circle cx="401.71" cy="64" r="0.28" fill="#a8a8a8"/><circle cx="412.69" cy="64" r="0.28" fill="#a8a8a8"/><circle cx="418.17" cy="64" r="0.28" fill="#a8a8a8"/><circle cx="423.66" cy="64" r="0.28" fill="#a8a8a8"/><path d="M429.15 62.7 V65.300" stroke="#9a9a9a" stroke-width="0.5"/><circle cx="434.64" cy="64" r="0.28" fill="#a8a8a8"/><circle cx="440.12" cy="64" r="0.28" fill="#a8a8a8"/><circle cx="445.61" cy="64" r="0.28" fill="#a8a8a8"/><circle cx="456.59" cy="64" r="0.28" fill="#a8a8a8"/><circle cx="462.07" cy="64" r="0.28" fill="#a8a8a8"/><circle cx="467.56" cy="64" r="0.28" fill="#a8a8a8"/><path d="M473.05 62.7 V65.300" stroke="#9a9a9a" stroke-width="0.5"/><circle cx="478.54" cy="64" r="0.28" fill="#a8a8a8"/><circle cx="484.02" cy="64" r="0.28" fill="#a8a8a8"/><circle cx="489.51" cy="64" r="0.28" fill="#a8a8a8"/><circle cx="500.49" cy="64" r="0.28" fill="#a8a8a8"/><circle cx="505.97" cy="64" r="0.28" fill="#a8a8a8"/><circle cx="511.46" cy="64" r="0.28" fill="#a8a8a8"/><path d="M516.95 62.7 V65.300" stroke="#9a9a9a" stroke-width="0.5"/><circle cx="522.44" cy="64" r="0.28" fill="#a8a8a8"/><circle cx="527.92" cy="64" r="0.28" fill="#a8a8a8"/><circle cx="533.41" cy="64" r="0.28" fill="#a8a8a8"/><circle cx="544.39" cy="64" r="0.28" fill="#a8a8a8"/><circle cx="549.88" cy="64" r="0.28" fill="#a8a8a8"/><circle cx="555.36" cy="64" r="0.28" fill="#a8a8a8"/><path d="M560.85 62.7 V65.300" stroke="#9a9a9a" stroke-width="0.5"/><circle cx="566.34" cy="64" r="0.28" fill="#a8a8a8"/><circle cx="571.82" cy="64" r="0.28" fill="#a8a8a8"/><circle cx="577.31" cy="64" r="0.28" fill="#a8a8a8"/><circle cx="588.29" cy="64" r="0.28" fill="#a8a8a8"/><circle cx="593.77" cy="64" r="0.28" fill="#a8a8a8"/><circle cx="599.26" cy="64" r="0.28" fill="#a8a8a8"/><path d="M604.75 62.7 V65.300" stroke="#9a9a9a" stroke-width="0.5"/><circle cx="610.24" cy="64" r="0.28" fill="#a8a8a8"/><circle cx="615.72" cy="64" r="0.28" fill="#a8a8a8"/><circle cx="621.21" cy="64" r="0.28" fill="#a8a8a8"/><circle cx="632.19" cy="64" r="0.28" fill="#a8a8a8"/><circle cx="637.67" cy="64" r="0.28" fill="#a8a8a8"/><circle cx="643.16" cy="64" r="0.28" fill="#a8a8a8"/><path d="M648.65 62.7 V65.300" stroke="#9a9a9a" stroke-width="0.5"/><circle cx="654.14" cy="64" r="0.28" fill="#a8a8a8"/><circle cx="659.62" cy="64" r="0.28" fill="#a8a8a8"/><circle cx="665.11" cy="64" r="0.28" fill="#a8a8a8"/><circle cx="676.09" cy="64" r="0.28" fill="#a8a8a8"/><circle cx="681.58" cy="64" r="0.28" fill="#a8a8a8"/><circle cx="687.06" cy="64" r="0.28" fill="#a8a8a8"/><path d="M692.55 62.7 V65.300" stroke="#9a9a9a" stroke-width="0.5"/><circle cx="698.04" cy="64" r="0.28" fill="#a8a8a8"/><circle cx="703.52" cy="64" r="0.28" fill="#a8a8a8"/><circle cx="709.01" cy="64" r="0.28" fill="#a8a8a8"/><circle cx="719.99" cy="64" r="0.28" fill="#a8a8a8"/><circle cx="725.47" cy="64" r="0.28" fill="#a8a8a8"/><circle cx="730.96" cy="64" r="0.28" fill="#a8a8a8"/><path d="M736.45 62.7 V65.300" stroke="#9a9a9a" stroke-width="0.5"/><circle cx="741.94" cy="64" r="0.28" fill="#a8a8a8"/><circle cx="747.42" cy="64" r="0.28" fill="#a8a8a8"/><circle cx="752.91" cy="64" r="0.28" fill="#a8a8a8"/><circle cx="763.89" cy="64" r="0.28" fill="#a8a8a8"/><circle cx="164.600" cy="72.98" r="0.28" fill="#a8a8a8"/><circle cx="164.600" cy="78.46" r="0.28" fill="#a8a8a8"/><path d="M163.300 83.95 H166" stroke="#9a9a9a" stroke-width="0.5"/><circle cx="164.600" cy="89.44" r="0.28" fill="#a8a8a8"/><circle cx="164.600" cy="94.93" r="0.28" fill="#a8a8a8"/><circle cx="164.600" cy="100.41" r="0.28" fill="#a8a8a8"/><circle cx="164.600" cy="111.39" r="0.28" fill="#a8a8a8"/><circle cx="164.600" cy="116.88" r="0.28" fill="#a8a8a8"/><circle cx="164.600" cy="122.36" r="0.28" fill="#a8a8a8"/><path d="M163.300 127.85 H166" stroke="#9a9a9a" stroke-width="0.5"/><circle cx="164.600" cy="133.34" r="0.28" fill="#a8a8a8"/><circle cx="164.600" cy="138.83" r="0.28" fill="#a8a8a8"/><circle cx="164.600" cy="144.31" r="0.28" fill="#a8a8a8"/><circle cx="164.600" cy="155.29" r="0.28" fill="#a8a8a8"/><circle cx="164.600" cy="160.78" r="0.28" fill="#a8a8a8"/><circle cx="164.600" cy="166.26" r="0.28" fill="#a8a8a8"/><path d="M163.300 171.75 H166" stroke="#9a9a9a" stroke-width="0.5"/><circle cx="164.600" cy="177.24" r="0.28" fill="#a8a8a8"/><circle cx="164.600" cy="182.73" r="0.28" fill="#a8a8a8"/><circle cx="164.600" cy="188.21" r="0.28" fill="#a8a8a8"/><circle cx="164.600" cy="199.19" r="0.28" fill="#a8a8a8"/><circle cx="164.600" cy="204.68" r="0.28" fill="#a8a8a8"/><circle cx="164.600" cy="210.16" r="0.28" fill="#a8a8a8"/><path d="M163.300 215.65 H166" stroke="#9a9a9a" stroke-width="0.5"/><circle cx="164.600" cy="221.14" r="0.28" fill="#a8a8a8"/><circle cx="164.600" cy="226.62" r="0.28" fill="#a8a8a8"/><circle cx="164.600" cy="232.11" r="0.28" fill="#a8a8a8"/><circle cx="164.600" cy="243.09" r="0.28" fill="#a8a8a8"/><circle cx="164.600" cy="248.57" r="0.28" fill="#a8a8a8"/><circle cx="164.600" cy="254.06" r="0.28" fill="#a8a8a8"/><path d="M163.300 259.55 H166" stroke="#9a9a9a" stroke-width="0.5"/><circle cx="164.600" cy="265.04" r="0.28" fill="#a8a8a8"/><circle cx="164.600" cy="270.52" r="0.28" fill="#a8a8a8"/><circle cx="164.600" cy="276.01" r="0.28" fill="#a8a8a8"/><circle cx="164.600" cy="286.99" r="0.28" fill="#a8a8a8"/><circle cx="164.600" cy="292.48" r="0.28" fill="#a8a8a8"/><circle cx="164.600" cy="297.96" r="0.28" fill="#a8a8a8"/><path d="M163.300 303.45 H166" stroke="#9a9a9a" stroke-width="0.5"/><circle cx="164.600" cy="308.94" r="0.28" fill="#a8a8a8"/><circle cx="164.600" cy="314.43" r="0.28" fill="#a8a8a8"/><circle cx="164.600" cy="319.91" r="0.28" fill="#a8a8a8"/><circle cx="164.600" cy="330.89" r="0.28" fill="#a8a8a8"/><circle cx="164.600" cy="336.38" r="0.28" fill="#a8a8a8"/><circle cx="164.600" cy="341.86" r="0.28" fill="#a8a8a8"/><path d="M163.300 347.35 H166" stroke="#9a9a9a" stroke-width="0.5"/><circle cx="164.600" cy="352.84" r="0.28" fill="#a8a8a8"/><circle cx="164.600" cy="358.33" r="0.28" fill="#a8a8a8"/><circle cx="164.600" cy="363.81" r="0.28" fill="#a8a8a8"/><circle cx="164.600" cy="374.79" r="0.28" fill="#a8a8a8"/><circle cx="164.600" cy="380.27" r="0.28" fill="#a8a8a8"/><circle cx="164.600" cy="385.76" r="0.28" fill="#a8a8a8"/><path d="M163.300 391.25 H166" stroke="#9a9a9a" stroke-width="0.5"/><circle cx="164.600" cy="396.74" r="0.28" fill="#a8a8a8"/><circle cx="164.600" cy="402.23" r="0.28" fill="#a8a8a8"/><circle cx="164.600" cy="407.71" r="0.28" fill="#a8a8a8"/><circle cx="164.600" cy="418.69" r="0.28" fill="#a8a8a8"/><circle cx="164.600" cy="424.18" r="0.28" fill="#a8a8a8"/></svg>
<span class="t" style="left:186.42px;top:63px;font-size:4.6px;font-weight:400;color:#4a4a4a;">3</span>
<span class="t" style="left:230.32px;top:63px;font-size:4.6px;font-weight:400;color:#4a4a4a;">2</span>
<span class="t" style="left:274.23px;top:63px;font-size:4.6px;font-weight:400;color:#4a4a4a;">1</span>
<span class="t" style="left:362.02px;top:63px;font-size:4.6px;font-weight:400;color:#4a4a4a;">1</span>
<span class="t" style="left:405.93px;top:63px;font-size:4.6px;font-weight:400;color:#4a4a4a;">2</span>
<span class="t" style="left:449.82px;top:63px;font-size:4.6px;font-weight:400;color:#4a4a4a;">3</span>
<span class="t" style="left:493.73px;top:63px;font-size:4.6px;font-weight:400;color:#4a4a4a;">4</span>
<span class="t" style="left:537.62px;top:63px;font-size:4.6px;font-weight:400;color:#4a4a4a;">5</span>
<span class="t" style="left:581.52px;top:63px;font-size:4.6px;font-weight:400;color:#4a4a4a;">6</span>
<span class="t" style="left:625.43px;top:63px;font-size:4.6px;font-weight:400;color:#4a4a4a;">7</span>
<span class="t" style="left:669.32px;top:63px;font-size:4.6px;font-weight:400;color:#4a4a4a;">8</span>
<span class="t" style="left:713.23px;top:63px;font-size:4.6px;font-weight:400;color:#4a4a4a;">9</span>
<span class="t" style="left:755.85px;top:63px;font-size:4.6px;font-weight:400;color:#4a4a4a;">10</span>
<div class="a" style="left:161.2px;top:102.90px;width:6.8px;height:6px;display:flex;align-items:center;justify-content:center"><span style="font-size:4.6px;color:#4a4a4a;transform:rotate(-90deg);line-height:1;display:block">1</span></div>
<div class="a" style="left:161.2px;top:190.70px;width:6.8px;height:6px;display:flex;align-items:center;justify-content:center"><span style="font-size:4.6px;color:#4a4a4a;transform:rotate(-90deg);line-height:1;display:block">1</span></div>
<div class="a" style="left:161.2px;top:234.60px;width:6.8px;height:6px;display:flex;align-items:center;justify-content:center"><span style="font-size:4.6px;color:#4a4a4a;transform:rotate(-90deg);line-height:1;display:block">2</span></div>
<div class="a" style="left:161.2px;top:278.50px;width:6.8px;height:6px;display:flex;align-items:center;justify-content:center"><span style="font-size:4.6px;color:#4a4a4a;transform:rotate(-90deg);line-height:1;display:block">3</span></div>
<div class="a" style="left:161.2px;top:322.40px;width:6.8px;height:6px;display:flex;align-items:center;justify-content:center"><span style="font-size:4.6px;color:#4a4a4a;transform:rotate(-90deg);line-height:1;display:block">4</span></div>
<div class="a" style="left:161.2px;top:366.30px;width:6.8px;height:6px;display:flex;align-items:center;justify-content:center"><span style="font-size:4.6px;color:#4a4a4a;transform:rotate(-90deg);line-height:1;display:block">5</span></div>
<div class="a" style="left:161.2px;top:410.20px;width:6.8px;height:6px;display:flex;align-items:center;justify-content:center"><span style="font-size:4.6px;color:#4a4a4a;transform:rotate(-90deg);line-height:1;display:block">6</span></div>
<svg style="left:0;top:0" width="768" height="426" viewBox="0 0 768 426"><rect x="175.0" y="85.5" width="586.9" height="331.5" fill="#2a2a2a"/><rect x="175.1" y="86.30000000000001" width="585.9" height="329.8" fill="#b9b2a8"/><rect x="175.9" y="87.0" width="585.1" height="329.09999999999997" fill="#fcf4e9"/><path d="M175.5 86.4 H352.400 C352.4 96 350 108 336 112.300 C331 114 328 114.600 322 114.800 L280 115.200 C262 115.600 248 118.500 236 125 C220 134 211 146 204 158 C197 171 193 181 189 191 C185 201 181 210 175.5 217.500 Z" fill="#7c4d29"/><path d="M761 256 C745 258 733 268 733 282 C733 300 740 315 742 335 C745 357 744 378 730 390 C715 400 690 397 660 400 C635 403 615 410 605 416.100 H761 Z" fill="#f7e3c6"/><g transform="translate(188.4 104.6) rotate(40)"><ellipse cx="0" cy="0" rx="8.3" ry="5.3" fill="none" stroke="#c7a98a" stroke-width="0.55"/><ellipse cx="0.3" cy="0.2" rx="7.4" ry="4.5" fill="none" stroke="#c7a98a" stroke-width="0.33" opacity="0.6"/><path d="M-5.98 0.64 Q-1.66 -1.48 0.83 0.11 T6.14 -0.53" fill="none" stroke="#c7a98a" stroke-width="0.7150000000000001"/><path d="M-4.98 1.59 Q-0.83 -0.27 5.15 0.42" fill="none" stroke="#c7a98a" stroke-width="0.385" opacity="0.7"/></g><g transform="translate(218.0 94.9) rotate(8)"><ellipse cx="0" cy="0" rx="8.8" ry="4.5" fill="none" stroke="#c7a98a" stroke-width="0.55"/><ellipse cx="0.3" cy="0.2" rx="7.9" ry="3.7" fill="none" stroke="#c7a98a" stroke-width="0.33" opacity="0.6"/><path d="M-6.34 0.54 Q-1.76 -1.26 0.88 0.09 T6.51 -0.45" fill="none" stroke="#c7a98a" stroke-width="0.7150000000000001"/><path d="M-5.28 1.35 Q-0.88 -0.23 5.46 0.36" fill="none" stroke="#c7a98a" stroke-width="0.385" opacity="0.7"/></g><g transform="translate(211.2 104.4) rotate(-8)"><ellipse cx="0" cy="0" rx="10.3" ry="6.2" fill="none" stroke="#c7a98a" stroke-width="0.55"/><ellipse cx="0.3" cy="0.2" rx="9.4" ry="5.4" fill="none" stroke="#c7a98a" stroke-width="0.33" opacity="0.6"/><path d="M-7.42 0.74 Q-2.06 -1.74 1.03 0.12 T7.62 -0.62" fill="none" stroke="#c7a98a" stroke-width="0.7150000000000001"/><path d="M-6.18 1.86 Q-1.03 -0.31 6.39 0.50" fill="none" stroke="#c7a98a" stroke-width="0.385" opacity="0.7"/></g><g transform="translate(223.9 112.3) rotate(-30)"><ellipse cx="0" cy="0" rx="10.4" ry="6.2" fill="none" stroke="#c7a98a" stroke-width="0.55"/><ellipse cx="0.3" cy="0.2" rx="9.5" ry="5.4" fill="none" stroke="#c7a98a" stroke-width="0.33" opacity="0.6"/><path d="M-7.49 0.74 Q-2.08 -1.74 1.04 0.12 T7.70 -0.62" fill="none" stroke="#c7a98a" stroke-width="0.7150000000000001"/><path d="M-6.24 1.86 Q-1.04 -0.31 6.45 0.50" fill="none" stroke="#c7a98a" stroke-width="0.385" opacity="0.7"/></g><g transform="translate(210.8 127.0) rotate(30)"><ellipse cx="0" cy="0" rx="10.3" ry="6.4" fill="none" stroke="#c7a98a" stroke-width="0.55"/><ellipse cx="0.3" cy="0.2" rx="9.4" ry="5.6000000000000005" fill="none" stroke="#c7a98a" stroke-width="0.33" opacity="0.6"/><path d="M-7.42 0.77 Q-2.06 -1.79 1.03 0.13 T7.62 -0.64" fill="none" stroke="#c7a98a" stroke-width="0.7150000000000001"/><path d="M-6.18 1.92 Q-1.03 -0.32 6.39 0.51" fill="none" stroke="#c7a98a" stroke-width="0.385" opacity="0.7"/></g><g transform="translate(701.8 379.1) rotate(35)"><ellipse cx="0" cy="0" rx="8.0" ry="5.2" fill="none" stroke="#b3a59a" stroke-width="0.55"/><ellipse cx="0.3" cy="0.2" rx="7.1" ry="4.4" fill="none" stroke="#b3a59a" stroke-width="0.33" opacity="0.6"/><path d="M-5.76 0.62 Q-1.60 -1.46 0.80 0.10 T5.92 -0.52" fill="none" stroke="#b3a59a" stroke-width="0.7150000000000001"/><path d="M-4.80 1.56 Q-0.80 -0.26 4.96 0.42" fill="none" stroke="#b3a59a" stroke-width="0.385" opacity="0.7"/></g><g transform="translate(730.9 369.3) rotate(5)"><ellipse cx="0" cy="0" rx="8.8" ry="4.4" fill="#fbf7f1" stroke="#b3a59a" stroke-width="0.55"/><ellipse cx="0.3" cy="0.2" rx="7.9" ry="3.6000000000000005" fill="none" stroke="#b3a59a" stroke-width="0.33" opacity="0.6"/><path d="M-6.34 0.53 Q-1.76 -1.23 0.88 0.09 T6.51 -0.44" fill="none" stroke="#b3a59a" stroke-width="0.7150000000000001"/><path d="M-5.28 1.32 Q-0.88 -0.22 5.46 0.35" fill="none" stroke="#b3a59a" stroke-width="0.385" opacity="0.7"/></g><g transform="translate(724.3 378.6) rotate(-10)"><ellipse cx="0" cy="0" rx="10.3" ry="6.3" fill="#fbf7f1" stroke="#b3a59a" stroke-width="0.55"/><ellipse cx="0.3" cy="0.2" rx="9.4" ry="5.5" fill="none" stroke="#b3a59a" stroke-width="0.33" opacity="0.6"/><path d="M-7.42 0.76 Q-2.06 -1.76 1.03 0.13 T7.62 -0.63" fill="none" stroke="#b3a59a" stroke-width="0.7150000000000001"/><path d="M-6.18 1.89 Q-1.03 -0.32 6.39 0.50" fill="none" stroke="#b3a59a" stroke-width="0.385" opacity="0.7"/></g><g transform="translate(737.1 386.6) rotate(-30)"><ellipse cx="0" cy="0" rx="10.3" ry="6.0" fill="none" stroke="#bfa88e" stroke-width="0.55"/><ellipse cx="0.3" cy="0.2" rx="9.4" ry="5.2" fill="none" stroke="#bfa88e" stroke-width="0.33" opacity="0.6"/><path d="M-7.42 0.72 Q-2.06 -1.68 1.03 0.12 T7.62 -0.60" fill="none" stroke="#bfa88e" stroke-width="0.7150000000000001"/><path d="M-6.18 1.80 Q-1.03 -0.30 6.39 0.48" fill="none" stroke="#bfa88e" stroke-width="0.385" opacity="0.7"/></g><g transform="translate(723.8 401.4) rotate(25)"><ellipse cx="0" cy="0" rx="10.0" ry="6.6" fill="none" stroke="#bfa88e" stroke-width="0.55"/><ellipse cx="0.3" cy="0.2" rx="9.1" ry="5.8" fill="none" stroke="#bfa88e" stroke-width="0.33" opacity="0.6"/><path d="M-7.20 0.79 Q-2.00 -1.85 1.00 0.13 T7.40 -0.66" fill="none" stroke="#bfa88e" stroke-width="0.7150000000000001"/><path d="M-6.00 1.98 Q-1.00 -0.33 6.20 0.53" fill="none" stroke="#bfa88e" stroke-width="0.385" opacity="0.7"/></g><g transform="translate(195.0 267.5) rotate(-25)"><clipPath id="bc1"><path d="M-8.55 -0.90 Q-2.70 -3.30 2.25 -0.60 Q5.85 1.80 8.73 -0.60 L9.00 6.00 L-9.00 6.00 Z"/></clipPath><ellipse cx="0" cy="0" rx="9.0" ry="6.0" fill="#f1ebe4" stroke="#875430" stroke-width="1.15"/><g clip-path="url(#bc1)"><ellipse cx="0" cy="0" rx="8.7" ry="5.7" fill="#875430" opacity="0.3"/><path d="M-4.95 5.70 L0.45 -0.30 M-1.85 5.70 L3.55 -0.30 M1.25 5.70 L6.65 -0.30 M4.35 5.70 L9.75 -0.30 M7.45 5.70 L12.85 -0.30 M10.55 5.70 L15.95 -0.30 " stroke="#f1ebe4" stroke-width="0.8" opacity="0.8"/></g><path d="M-8.10 -0.72 Q-2.70 -3.30 2.25 -0.60 Q5.40 1.50 8.10 -0.30" fill="none" stroke="#875430" stroke-width="1.2"/><path d="M-6.48 -3.00 Q0.00 -6.00 6.48 -3.00" fill="none" stroke="#875430" stroke-width="0.6" opacity="0.85"/></g><g transform="translate(211.5 387.7) rotate(10)"><clipPath id="bc2"><path d="M-10.73 -1.11 Q-3.39 -4.07 2.83 -0.74 Q7.35 2.22 10.96 -0.74 L11.30 7.40 L-11.30 7.40 Z"/></clipPath><ellipse cx="0" cy="0" rx="11.3" ry="7.4" fill="#f7ecdf" stroke="#875430" stroke-width="1.15"/><g clip-path="url(#bc2)"><ellipse cx="0" cy="0" rx="11.0" ry="7.1000000000000005" fill="#875430" opacity="0.95"/><path d="M-6.22 7.03 L0.44 -0.37 M-3.12 7.03 L3.54 -0.37 M-0.02 7.03 L6.64 -0.37 M3.08 7.03 L9.74 -0.37 M6.18 7.03 L12.84 -0.37 M9.29 7.03 L15.95 -0.37 M12.38 7.03 L19.05 -0.37 " stroke="#f7ecdf" stroke-width="0.8" opacity="0.8"/></g><path d="M-10.17 -0.89 Q-3.39 -4.07 2.83 -0.74 Q6.78 1.85 10.17 -0.37" fill="none" stroke="#875430" stroke-width="1.2"/><path d="M-8.14 -3.70 Q0.00 -7.40 8.14 -3.70" fill="none" stroke="#875430" stroke-width="1.5" opacity="0.85"/></g><g transform="translate(674.5 253.5) rotate(10)"><clipPath id="bc3"><path d="M-10.73 -1.14 Q-3.39 -4.18 2.83 -0.76 Q7.35 2.28 10.96 -0.76 L11.30 7.60 L-11.30 7.60 Z"/></clipPath><ellipse cx="0" cy="0" rx="11.3" ry="7.6" fill="#f7ecdf" stroke="#875430" stroke-width="1.15"/><g clip-path="url(#bc3)"><ellipse cx="0" cy="0" rx="11.0" ry="7.3" fill="#875430" opacity="0.9"/><path d="M-6.22 7.22 L0.62 -0.38 M-3.12 7.22 L3.72 -0.38 M-0.02 7.22 L6.82 -0.38 M3.08 7.22 L9.92 -0.38 M6.18 7.22 L13.02 -0.38 M9.29 7.22 L16.12 -0.38 M12.38 7.22 L19.23 -0.38 " stroke="#f7ecdf" stroke-width="0.8" opacity="0.8"/></g><path d="M-10.17 -0.91 Q-3.39 -4.18 2.83 -0.76 Q6.78 1.90 10.17 -0.38" fill="none" stroke="#875430" stroke-width="1.2"/><path d="M-8.14 -3.80 Q0.00 -7.60 8.14 -3.80" fill="none" stroke="#875430" stroke-width="1.3" opacity="0.85"/></g><rect x="348.5" y="149.4" width="251.500" height="21" fill="#b4c9f3"/><rect x="315.2" y="134.300" width="305.600" height="51" fill="none" stroke="#4a86e8" stroke-width="0.7"/><path d="M468 134.300 V124" stroke="#4a86e8" stroke-width="0.7"/><circle cx="468" cy="123.900" r="1.300" fill="#2f6fe0"/><rect x="313.70" y="132.80" width="3" height="3" fill="#2f6fe0"/><rect x="313.70" y="158.30" width="3" height="3" fill="#2f6fe0"/><rect x="313.70" y="183.80" width="3" height="3" fill="#2f6fe0"/><rect x="466.50" y="132.80" width="3" height="3" fill="#2f6fe0"/><rect x="466.50" y="183.80" width="3" height="3" fill="#2f6fe0"/><rect x="619.30" y="132.80" width="3" height="3" fill="#2f6fe0"/><rect x="619.30" y="158.30" width="3" height="3" fill="#2f6fe0"/><rect x="619.30" y="183.80" width="3" height="3" fill="#2f6fe0"/><rect x="297.400" y="171.200" width="14.800" height="14.600" rx="3.200" fill="#e9e1d6" opacity="0.6"/><rect x="297.700" y="171" width="14.200" height="14.300" rx="3" fill="#fff"/><path d="M300.900 176.800 H308.800 M300.900 178.800 H308.800" stroke="#b9b9b9" stroke-width="1.100"/><path d="M303.800 173.700 H306.200 L305 175.200 Z M303.800 182 H306.200 L305 180.500 Z" fill="#333"/></svg>
<div id="title" style="position:absolute;left:0;top:0"><span class="t" style="left:349.60px;top:152px;font-size:17.7px;font-weight:700;color:#141414;letter-spacing:-1.470px;">Click</span><span class="t" style="left:392.50px;top:152px;font-size:17.7px;font-weight:700;color:#141414;letter-spacing:-0.603px;">to</span><span class="t" style="left:414.50px;top:152px;font-size:17.7px;font-weight:700;color:#141414;letter-spacing:-0.051px;">edit</span><span class="t" style="left:452.20px;top:152px;font-size:17.7px;font-weight:700;color:#141414;letter-spacing:-0.027px;">theme</span><span class="t" style="left:510.80px;top:152px;font-size:17.7px;font-weight:700;color:#141414;letter-spacing:0.162px;">title</span><span class="t" style="left:548.90px;top:152px;font-size:17.7px;font-weight:700;color:#141414;letter-spacing:-0.507px;">style</span></div>
</div>
</body></html>
